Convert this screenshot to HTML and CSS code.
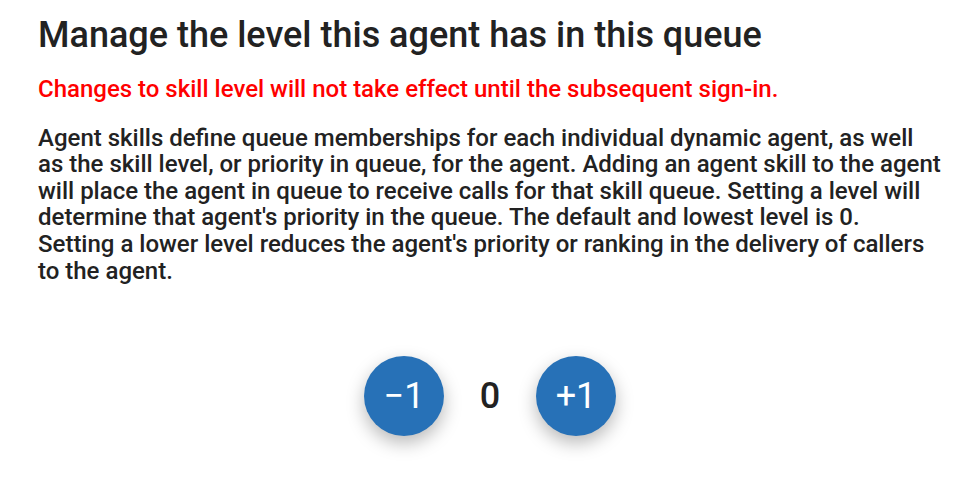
FILE: index.html
```html
<!DOCTYPE html>
<html lang="en">
<head>
    <meta charset="UTF-8">
    <meta name="viewport" content="width=device-width, initial-scale=1.0">
    <title>Agent Skill Level</title>
    <link rel="stylesheet" href="styles.css">
</head>
<body>

<div class="container">
    <h1>Manage the level this agent has in this queue</h1>

    <p class="warning">Changes to skill level will not take effect until the subsequent sign-in.</p>

    <p class="description">Agent skills define queue memberships for each individual dynamic agent, as well as the skill level, or priority in queue, for the agent. Adding an agent skill to the agent will place the agent in queue to receive calls for that skill queue. Setting a level will determine that agent's priority in the queue. The default and lowest level is 0. Setting a lower level reduces the agent's priority or ranking in the delivery of callers to the agent.</p>

    <div class="level-control">
        <button id="level-down" class="level-button">&minus;1</button>
        <span id="level" class="level-value">0</span>
        <button id="level-up" class="level-button">+1</button>
    </div>
</div>

<script>
    let level = 0;
    const levelEl = document.getElementById("level");

    function setLevel(value) {
        level = Math.max(0, value); // 0 is the lowest level
        levelEl.textContent = level;
    }

    document.getElementById("level-down").addEventListener("click", () => setLevel(level - 1));
    document.getElementById("level-up").addEventListener("click", () => setLevel(level + 1));
</script>

</body>
</html>
```

FILE: styles.css
```css
body {
    font-family: Roboto, Arial, sans-serif;
    margin: 0;
    padding: 0;
    background-color: #ffffff;
    color: #222;
}
.container {
    padding: 14px 38px 40px 38px;
}
h1 {
    font-size: 36px;
    font-weight: 500;
    line-height: 42px;
    margin: 0;
}
.warning {
    color: #ff0000;
    font-size: 24px;
    font-weight: 500;
    line-height: 26.6px;
    margin: 20px 0 0 0;
}
.description {
    font-size: 24px;
    font-weight: 500;
    line-height: 26.6px;
    margin: 22px 0 0 0;
}
.level-control {
    display: flex;
    justify-content: center;
    align-items: center;
    gap: 30px;
    margin-top: 72px;
}
.level-button {
    width: 80px;
    height: 80px;
    border-radius: 50%;
    border: none;
    background-color: #2771b7;
    color: white;
    font-family: Roboto, Arial, sans-serif;
    font-size: 36px;
    box-shadow: 0 7px 18px rgba(0, 0, 0, 0.28);
    cursor: pointer;
}
.level-value {
    font-size: 36px;
    font-weight: 500;
    width: 32px;
    text-align: center;
}
```
